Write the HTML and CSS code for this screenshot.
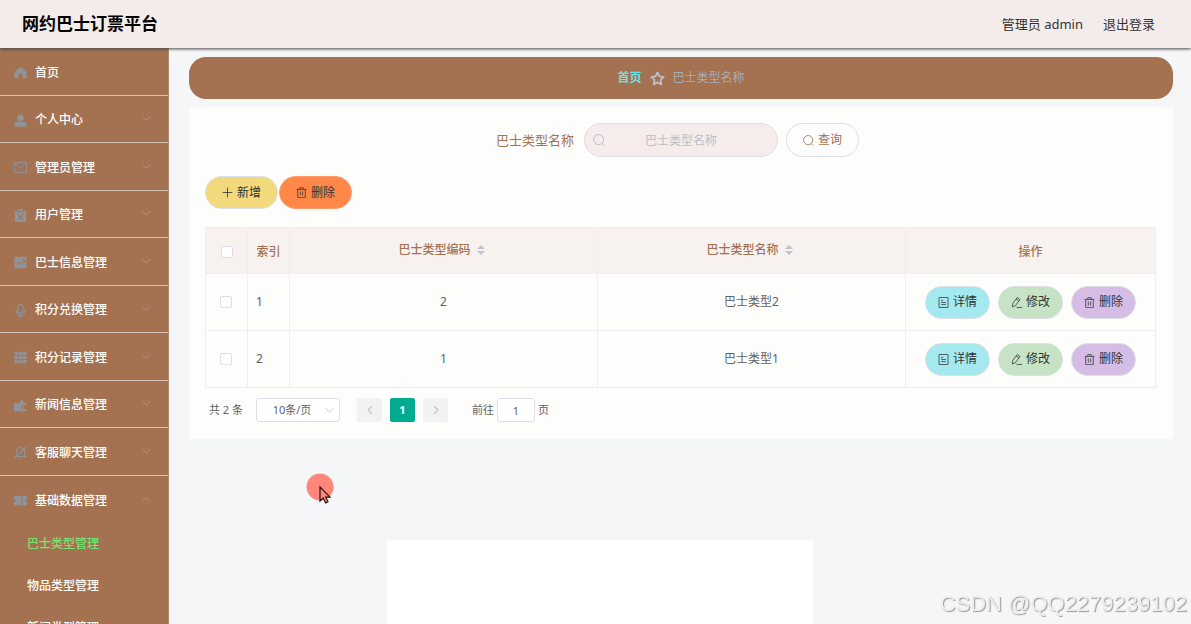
FILE: index.html
```
<!DOCTYPE html>
<html lang="zh-CN">
<head>
    <meta charset="UTF-8">
    <meta name="viewport" content="width=device-width, initial-scale=1.0">
    <title>网约巴士订票平台</title>
    <link rel="stylesheet" href="styles.css">
</head>
<body>
    <svg class="sprite" xmlns="http://www.w3.org/2000/svg">
        <symbol id="down" viewBox="0 0 16 16"><path d="M1 4l7 7 7-7" fill="none" stroke="currentColor" stroke-width="1.6"/></symbol>
        <symbol id="up" viewBox="0 0 16 16"><path d="M1 12l7-7 7 7" fill="none" stroke="currentColor" stroke-width="1.6"/></symbol>
        <symbol id="search" viewBox="0 0 16 16"><circle cx="7.5" cy="7.5" r="6.7" fill="none" stroke="currentColor" stroke-width="1.2"/><path d="M12 12.500l3 3" stroke="currentColor" stroke-width="1.2"/></symbol>
        <symbol id="trash" viewBox="0 0 16 16"><path d="M1 3.5h14M5.500 3.500v-2.500h5v2.500M2.500 3.500v12h11v-12M6.300 6.500v6M9.700 6.500v6" fill="none" stroke="currentColor" stroke-width="1.1"/></symbol>
        <symbol id="doc" viewBox="0 0 16 16"><path d="M1.500 .7h13v14.600h-13zM4.500 5h3M4.500 8h7M4.500 11h7" fill="none" stroke="currentColor" stroke-width="1.1"/></symbol>
        <symbol id="edit" viewBox="0 0 16 16"><path d="M2.500 9.500L9 .8l4 2.800-6.500 9L2 14.500zM7.500 3l4 2.800M8 15.200h8" fill="none" stroke="currentColor" stroke-width="1.1"/></symbol>
    </svg>

    <header class="header">
        <h1 class="title">网约巴士订票平台</h1>
        <div class="user">
            <span>管理员 admin</span>
            <a href="#">退出登录</a>
        </div>
    </header>

    <div class="layout">
        <nav class="sidebar">
            <ul class="menu">
                <li><a href="#">
                    <svg class="icon" viewBox="0 0 16 16"><path d="M8 1l7.5 6.5V15H10.500V9.500h-5V15H.5V7.500z" fill="currentColor"/></svg>
                    <span>首页</span></a></li>
                <li><a href="#">
                    <svg class="icon" viewBox="0 0 16 16"><circle cx="8" cy="4.500" r="4" fill="currentColor"/><path d="M.5 15.500v-2a4 4 0 0 1 4-4h7a4 4 0 0 1 4 4v2z" fill="currentColor"/></svg>
                    <span>个人中心</span><svg class="arrow"><use href="#down"/></svg></a></li>
                <li><a href="#">
                    <svg class="icon" viewBox="0 0 16 16"><path d="M.6 2h14.800v12H.6zM1 2.500l7 7 7-7" fill="none" stroke="currentColor" stroke-width="1.200"/></svg>
                    <span>管理员管理</span><svg class="arrow"><use href="#down"/></svg></a></li>
                <li><a href="#">
                    <svg class="icon" viewBox="0 0 16 16"><path d="M1 2h3v2h8V2h3v14H1zM5 0h6v3H5z" fill="currentColor"/><path d="M5 7l6 6M11 7l-6 6" stroke="#a47250" stroke-width="1.300"/></svg>
                    <span>用户管理</span><svg class="arrow"><use href="#down"/></svg></a></li>
                <li><a href="#">
                    <svg class="icon" viewBox="0 0 16 16"><path d="M.5 1h15v14H.5z" fill="currentColor"/><path d="M3 11l3.500-4 2.500 3 4-5M10 5h3v3" fill="none" stroke="#a47250" stroke-width="1.200"/></svg>
                    <span>巴士信息管理</span><svg class="arrow"><use href="#down"/></svg></a></li>
                <li><a href="#">
                    <svg class="icon" viewBox="0 0 16 16"><rect x="5" y=".5" width="6" height="10.500" rx="3" fill="none" stroke="currentColor" stroke-width="1.400"/><path d="M2.500 7v1a5.500 5.500 0 0 0 11 0V7M8 13.500V16M5.500 15.400h5" fill="none" stroke="currentColor" stroke-width="1.400"/></svg>
                    <span>积分兑换管理</span><svg class="arrow"><use href="#down"/></svg></a></li>
                <li><a href="#">
                    <svg class="icon" viewBox="0 0 16 16"><path d="M.5 1h4.500v4H.5zM5.800 1h4.500v4H5.800zM11 1h4.500v4H11zM.5 6h4.500v4H.5zM5.800 6h4.500v4H5.800zM11 6h4.500v4H11zM.5 11h4.500v4H.5zM5.800 11h4.500v4H5.800zM11 11h4.500v4H11z" fill="currentColor"/></svg>
                    <span>积分记录管理</span><svg class="arrow"><use href="#down"/></svg></a></li>
                <li><a href="#">
                    <svg class="icon" viewBox="0 0 16 16"><path d="M0 5h6l4-4 3 4h2v3h-4a2 2 0 0 0 0 4h4v3H0z" fill="currentColor"/><circle cx="11.500" cy="10" r="1" fill="currentColor"/></svg>
                    <span>新闻信息管理</span><svg class="arrow"><use href="#down"/></svg></a></li>
                <li><a href="#">
                    <svg class="icon" viewBox="0 0 16 16"><path d="M1 13h14M3 13V7a5 5 0 0 1 10 0v6M8 0v2M6.500 15.300h3M15 1L1 15" fill="none" stroke="currentColor" stroke-width="1.300"/></svg>
                    <span>客服聊天管理</span><svg class="arrow"><use href="#down"/></svg></a></li>
                <li><a href="#">
                    <svg class="icon" viewBox="0 0 16 16"><path d="M0 2h9v12H0v-4a2 2 0 0 0 0-4zM10.500 2H16v4a2 2 0 0 0 0 4v4h-5.500z" fill="currentColor"/><path d="M9 3h1.500v2H9zM9 7h1.500v2H9zM9 11h1.500v2H9z" fill="currentColor"/></svg>
                    <span>基础数据管理</span><svg class="arrow"><use href="#up"/></svg></a></li>
            </ul>
            <ul class="submenu">
                <li><a class="active" href="#">巴士类型管理</a></li>
                <li><a href="#">物品类型管理</a></li>
                <li><a href="#">新闻类型管理</a></li>
            </ul>
        </nav>

        <main class="main">
            <div class="breadcrumb">
                <a href="#">首页</a>
                <svg class="star" viewBox="0 0 16 16"><path d="M8 1.500l2 4.300 4.700.6-3.500 3.200.9 4.700L8 12l-4.100 2.300.9-4.700L1.300 6.400 6 5.800z" fill="none" stroke="currentColor" stroke-width="1.800" stroke-linejoin="round"/></svg>
                <span>巴士类型名称</span>
            </div>

            <section class="panel">
                <form class="search">
                    <label for="typeName">巴士类型名称</label>
                    <div class="search-box">
                        <svg class="search-icon"><use href="#search"/></svg>
                        <input type="text" id="typeName" placeholder="巴士类型名称">
                    </div>
                    <button type="button" class="btn query"><svg><use href="#search"/></svg>查询</button>
                </form>

                <div class="actions">
                    <button type="button" class="btn add"><svg viewBox="0 0 16 16"><path d="M8 1v14M1 8h14" stroke="currentColor" stroke-width="1.200"/></svg>新增</button>
                    <button type="button" class="btn remove"><svg><use href="#trash"/></svg>删除</button>
                </div>

                <table class="table">
                    <thead>
                        <tr>
                            <th class="col-check"><input type="checkbox" aria-label="全选"></th>
                            <th class="col-index">索引</th>
                            <th><span class="sortable">巴士类型编码<svg class="sort" viewBox="0 0 8 10"><path d="M0 4l4-4 4 4zM0 6h8l-4 4z" fill="currentColor"/></svg></span></th>
                            <th><span class="sortable">巴士类型名称<svg class="sort" viewBox="0 0 8 10"><path d="M0 4l4-4 4 4zM0 6h8l-4 4z" fill="currentColor"/></svg></span></th>
                            <th class="col-ops">操作</th>
                        </tr>
                    </thead>
                    <tbody>
                        <tr>
                            <td class="check"><input type="checkbox" aria-label="选择第1行"></td>
                            <td class="index">1</td>
                            <td>2</td>
                            <td>巴士类型2</td>
                            <td>
                                <div class="ops">
                                    <button type="button" class="btn detail"><svg><use href="#doc"/></svg>详情</button>
                                    <button type="button" class="btn edit"><svg><use href="#edit"/></svg>修改</button>
                                    <button type="button" class="btn delete"><svg><use href="#trash"/></svg>删除</button>
                                </div>
                            </td>
                        </tr>
                        <tr>
                            <td class="check"><input type="checkbox" aria-label="选择第2行"></td>
                            <td class="index">2</td>
                            <td>1</td>
                            <td>巴士类型1</td>
                            <td>
                                <div class="ops">
                                    <button type="button" class="btn detail"><svg><use href="#doc"/></svg>详情</button>
                                    <button type="button" class="btn edit"><svg><use href="#edit"/></svg>修改</button>
                                    <button type="button" class="btn delete"><svg><use href="#trash"/></svg>删除</button>
                                </div>
                            </td>
                        </tr>
                    </tbody>
                </table>

                <div class="pagination">
                    <span>共 2 条</span>
                    <div class="size">
                        <select aria-label="每页条数">
                            <option>10条/页</option>
                            <option>20条/页</option>
                        </select>
                        <svg><use href="#down"/></svg>
                    </div>
                    <div class="pager">
                        <button type="button" aria-label="上一页" disabled><svg viewBox="0 0 16 16"><path d="M11 2L5 8l6 6" fill="none" stroke="currentColor" stroke-width="2"/></svg></button>
                        <button type="button" class="current">1</button>
                        <button type="button" aria-label="下一页" disabled><svg viewBox="0 0 16 16"><path d="M5 2l6 6-6 6" fill="none" stroke="currentColor" stroke-width="2"/></svg></button>
                    </div>
                    <div class="jump">
                        <label for="page">前往</label>
                        <input type="text" id="page" value="1">
                        <span>页</span>
                    </div>
                </div>
            </section>
        </main>
    </div>

    <div class="popup"></div>
    <div class="watermark">CSDN @QQ2279239102</div>
    <svg class="pointer" viewBox="0 0 28 32">
        <circle cx="14" cy="14" r="13.500" fill="#ff877b"/>
        <path d="M14 14v14l3.200-3 2.400 5 2.400-1.200-2.300-4.600H24z" fill="#ff877b" stroke="#301010" stroke-width="1.200"/>
    </svg>
</body>
</html>
```
FILE: styles.css
```
* {
    box-sizing: border-box;
}

body {
    margin: 0;
    height: 100vh;
    display: flex;
    flex-direction: column;
    overflow: hidden;
    background-color: #f4f6f8;
    color: #606266;
    font-family: "Noto Sans", "Noto Sans CJK SC", sans-serif;
    font-size: 12px;
    line-height: 18px;
}

a {
    color: inherit;
    text-decoration: none;
}

ul {
    list-style: none;
    margin: 0;
    padding: 0;
}

button, input, select {
    font: inherit;
    color: inherit;
}

.sprite {
    display: none;
}

/* header */
.header {
    display: flex;
    flex-shrink: 0;
    align-items: center;
    justify-content: space-between;
    height: 48px;
    padding: 0 36px 0 22px;
    background-color: #f3eceb;
    box-shadow: 0 1px 3px #444;
    z-index: 1;
}

.title {
    margin: 0;
    color: #000;
    font-size: 17px;
    line-height: 24px;
}

.user {
    display: flex;
    gap: 20px;
    color: #333;
    font-size: 13px;
}

.layout {
    display: flex;
    flex: 1;
    min-height: 0;
}

/* sidebar */
.sidebar {
    flex: 0 0 169px;
    overflow: hidden;
    background-color: #a47250;
    color: #fff;
    border-right: 1px solid #b0886c;
    font-weight: 500;
}

.menu a {
    display: flex;
    align-items: center;
    height: 47px;
    padding: 2px 17px 0 14px;
    border-bottom: 1px solid #d8c4b7;
}

.menu li:nth-child(odd) a {
    height: 48px;
}

.menu li:last-child a {
    border-bottom: none;
}

.icon {
    width: 13px;
    height: 13px;
    margin-right: 8px;
    color: #909399;
}

.arrow {
    width: 9px;
    height: 9px;
    margin: 0 0 3px auto;
    color: #a89a92;
}

.submenu a {
    display: block;
    padding-left: 27px;
    line-height: 42px;
}

.submenu .active {
    color: #73e573;
}

/* content */
.main {
    flex: 1;
    min-width: 0;
    padding: 9px 18px 0 20px;
}

.breadcrumb {
    display: flex;
    align-items: center;
    justify-content: center;
    gap: 8px;
    height: 42px;
    margin-bottom: 8px;
    border-radius: 17px;
    background-color: #a47250;
    color: #a9adb5;
}

.breadcrumb a {
    color: #6fe0e6;
    font-weight: bold;
}

.star {
    width: 15px;
    height: 15px;
    color: #c0c4cc;
}

.panel {
    padding: 16px 17px 17px 16px;
    background-color: #fdfdfb;
}

.search {
    display: flex;
    align-items: center;
    justify-content: center;
    margin-bottom: 19px;
    padding-right: 6px;
}

.search label {
    margin-right: 10px;
    color: #a47250;
    font-size: 13px;
}

.search-box {
    position: relative;
    margin-right: 8px;
}

.search-box input {
    display: block;
    width: 194px;
    height: 34px;
    padding: 0 24px;
    border: 1px solid #dcdfe6;
    border-radius: 17px;
    background-color: #f5eceb;
    text-align: center;
}

.search-box input::placeholder {
    color: #bcbfc7;
}

.search-icon {
    position: absolute;
    top: 11px;
    left: 9px;
    width: 12px;
    height: 12px;
    color: #b8bbc3;
}

.btn {
    display: flex;
    align-items: center;
    justify-content: center;
    gap: 4px;
    height: 33px;
    padding: 0 12px;
    border: 1px solid #dcdfe6;
    border-radius: 17px;
    color: #333;
    cursor: pointer;
}

.btn svg {
    width: 11px;
    height: 11px;
}

.query, .add, .remove {
    padding: 0 16px;
}

.query {
    height: 34px;
    background-color: #fdfdfd;
    color: #a47250;
}

.add {
    background-color: #f2da7c;
}

.remove {
    border-color: #ff9a6a;
    background-color: #ff8849;
}

.actions {
    display: flex;
    gap: 1px;
    margin-bottom: 18px;
}

/* table */
.table {
    width: 100%;
    table-layout: fixed;
    border-collapse: collapse;
}

.table th, .table td {
    height: 57px;
    padding: 0;
    border: 1px solid #ebeef5;
    text-align: center;
}

.table th {
    height: 46px;
    padding-top: 2px;
    background-color: #f7f2f0;
    color: #a47250;
    font-weight: 500;
}

.col-check, .col-index {
    width: 42px;
}

.col-ops {
    width: 250px;
}

.table .check {
    padding-right: 2px;
}

.table .index {
    padding-left: 8px;
    text-align: left;
}

.table input {
    appearance: none;
    display: block;
    width: 12px;
    height: 12px;
    margin: 0 auto;
    border: 1px solid #dcdfe6;
    border-radius: 2px;
    background-color: #fff;
}

.table input:checked {
    background-color: #00ab8f;
}

.sortable {
    display: flex;
    align-items: center;
    justify-content: center;
    gap: 6px;
    padding: 0 4px 4px 0;
}

.sort {
    width: 8px;
    height: 10px;
    color: #c0c4cc;
}

.ops {
    display: flex;
    justify-content: center;
    gap: 8px;
}

.detail {
    background-color: #a5e9f0;
}

.edit {
    background-color: #c6e3c5;
}

.delete {
    background-color: #d5bde6;
}

/* pagination */
.pagination {
    display: flex;
    align-items: center;
    margin-top: 10px;
    padding-left: 4px;
    font-size: 11px;
}

.size {
    position: relative;
    margin: 0 17px 0 13px;
}

.size select {
    appearance: none;
    display: block;
    width: 84px;
    height: 24px;
    padding: 0 20px 0 8px;
    border: 1px solid #dcdfe6;
    border-radius: 3px;
    background-color: #fff;
    text-align: center;
    text-align-last: center;
}

.size svg {
    position: absolute;
    top: 8px;
    right: 6px;
    width: 9px;
    height: 9px;
    color: #c0c4cc;
}

.pager {
    display: flex;
    gap: 8px;
    margin-right: 24px;
}

.pager button {
    display: flex;
    align-items: center;
    justify-content: center;
    width: 25px;
    height: 24px;
    padding: 0;
    border: none;
    border-radius: 2px;
    background-color: #f2f2f2;
    color: #c0c4cc;
}

.pager svg {
    width: 10px;
    height: 10px;
}

.pager .current {
    background-color: #00ab8f;
    color: #fff;
    font-weight: bold;
}

.jump {
    display: flex;
    align-items: center;
    gap: 3px;
}

.jump input {
    width: 38px;
    height: 24px;
    padding: 0;
    border: 1px solid #dcdfe6;
    border-radius: 3px;
    background-color: #fff;
    text-align: center;
}

/* layers over the page */
.popup {
    position: fixed;
    left: 387px;
    bottom: 0;
    width: 426px;
    height: 84px;
    background-color: #fff;
}

.watermark {
    position: fixed;
    right: 4px;
    bottom: 6px;
    color: #eceef0;
    font-family: "Liberation Sans", sans-serif;
    font-size: 22px;
    line-height: 28px;
    text-shadow: 1px 1px 1px #999;
}

.pointer {
    position: fixed;
    left: 306px;
    top: 473px;
    width: 28px;
    height: 32px;
}
```
